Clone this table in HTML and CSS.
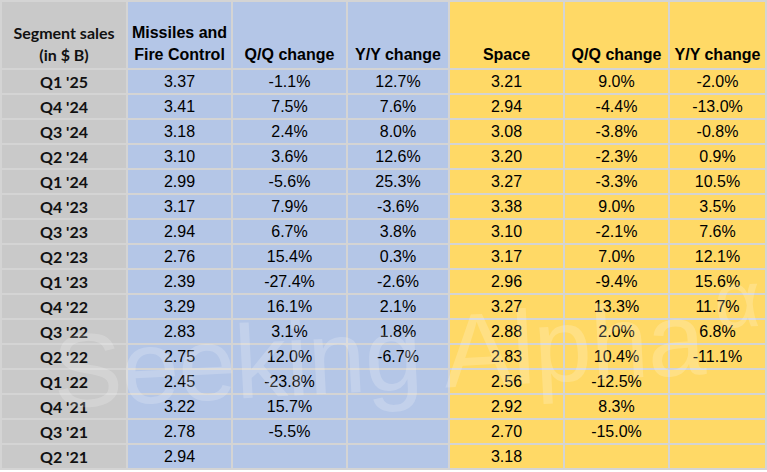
FILE: index.html
```html
<!DOCTYPE html>
<html>
<head>
<meta charset="utf-8">
<link rel="stylesheet" href="styles.css">
</head>
<body>
<div class="sheet">
<table class="grid">
<colgroup>
<col class="c1"><col class="c2"><col class="c3"><col class="c4"><col class="c5"><col class="c6"><col class="c7">
</colgroup>
<thead>
<tr>
<th class="seg">Segment sales<br>(in $ B)</th>
<th class="b">Missiles and<br>Fire Control</th>
<th class="b">Q/Q change</th>
<th class="b">Y/Y change</th>
<th class="y">Space</th>
<th class="y">Q/Q change</th>
<th class="y">Y/Y change</th>
</tr>
</thead>
<tbody>
<tr><td class="seg">Q1 '25</td><td class="b">3.37</td><td class="b">-1.1%</td><td class="b">12.7%</td><td class="y">3.21</td><td class="y">9.0%</td><td class="y">-2.0%</td></tr>
<tr><td class="seg">Q4 '24</td><td class="b">3.41</td><td class="b">7.5%</td><td class="b">7.6%</td><td class="y">2.94</td><td class="y">-4.4%</td><td class="y">-13.0%</td></tr>
<tr><td class="seg">Q3 '24</td><td class="b">3.18</td><td class="b">2.4%</td><td class="b">8.0%</td><td class="y">3.08</td><td class="y">-3.8%</td><td class="y">-0.8%</td></tr>
<tr><td class="seg">Q2 '24</td><td class="b">3.10</td><td class="b">3.6%</td><td class="b">12.6%</td><td class="y">3.20</td><td class="y">-2.3%</td><td class="y">0.9%</td></tr>
<tr><td class="seg">Q1 '24</td><td class="b">2.99</td><td class="b">-5.6%</td><td class="b">25.3%</td><td class="y">3.27</td><td class="y">-3.3%</td><td class="y">10.5%</td></tr>
<tr><td class="seg">Q4 '23</td><td class="b">3.17</td><td class="b">7.9%</td><td class="b">-3.6%</td><td class="y">3.38</td><td class="y">9.0%</td><td class="y">3.5%</td></tr>
<tr><td class="seg">Q3 '23</td><td class="b">2.94</td><td class="b">6.7%</td><td class="b">3.8%</td><td class="y">3.10</td><td class="y">-2.1%</td><td class="y">7.6%</td></tr>
<tr><td class="seg">Q2 '23</td><td class="b">2.76</td><td class="b">15.4%</td><td class="b">0.3%</td><td class="y">3.17</td><td class="y">7.0%</td><td class="y">12.1%</td></tr>
<tr><td class="seg">Q1 '23</td><td class="b">2.39</td><td class="b">-27.4%</td><td class="b">-2.6%</td><td class="y">2.96</td><td class="y">-9.4%</td><td class="y">15.6%</td></tr>
<tr><td class="seg">Q4 '22</td><td class="b">3.29</td><td class="b">16.1%</td><td class="b">2.1%</td><td class="y">3.27</td><td class="y">13.3%</td><td class="y">11.7%</td></tr>
<tr><td class="seg">Q3 '22</td><td class="b">2.83</td><td class="b">3.1%</td><td class="b">1.8%</td><td class="y">2.88</td><td class="y">2.0%</td><td class="y">6.8%</td></tr>
<tr><td class="seg">Q2 '22</td><td class="b">2.75</td><td class="b">12.0%</td><td class="b">-6.7%</td><td class="y">2.83</td><td class="y">10.4%</td><td class="y">-11.1%</td></tr>
<tr><td class="seg">Q1 '22</td><td class="b">2.45</td><td class="b">-23.8%</td><td class="b"></td><td class="y">2.56</td><td class="y">-12.5%</td><td class="y"></td></tr>
<tr><td class="seg">Q4 '21</td><td class="b">3.22</td><td class="b">15.7%</td><td class="b"></td><td class="y">2.92</td><td class="y">8.3%</td><td class="y"></td></tr>
<tr><td class="seg">Q3 '21</td><td class="b">2.78</td><td class="b">-5.5%</td><td class="b"></td><td class="y">2.70</td><td class="y">-15.0%</td><td class="y"></td></tr>
<tr><td class="seg">Q2 '21</td><td class="b">2.94</td><td class="b"></td><td class="b"></td><td class="y">3.18</td><td class="y"></td><td class="y"></td></tr>
</tbody>
</table>
<div class="watermark">Seeking Alpha<span class="alpha">α</span></div>
</div>
</body>
</html>
```

FILE: styles.css
```css
html, body {
  margin: 0;
  padding: 0;
  background: #ffffff;
}

.sheet {
  position: relative;
  width: 767px;
  height: 472px;
  overflow: hidden;
}

.grid {
  border-collapse: separate;
  border-spacing: 2px;
  background: #d4d4d4;
  width: 767px;
  table-layout: fixed;
  font-family: "Liberation Sans", Arial, sans-serif;
  font-size: 16px;
  color: #000;
}

.c1 { width: 124px; }
.c2 { width: 103px; }
.c3 { width: 113px; }
.c4 { width: 100px; }
.c5 { width: 113px; }
.c6 { width: 103px; }
.c7 { width: 95px; }

.grid th, .grid td {
  padding: 0;
  text-align: center;
  white-space: nowrap;
  overflow: hidden;
}

.grid th {
  height: 66px;
  vertical-align: bottom;
  line-height: 22px;
  font-weight: bold;
  padding-bottom: 2px;
  box-sizing: border-box;
}

.grid td {
  height: 23px;
  line-height: 23px;
  vertical-align: middle;
}

.seg {
  background: #c9c9c9;
  font-family: Lato, "Liberation Sans", sans-serif;
  font-weight: bold;
  font-size: 16px;
  color: #111;
}

.grid th.seg {
  font-size: 16px;
}

.b { background: #b4c6e7; }
.y { background: #ffd966; }

.watermark {
  position: absolute;
  left: 56px;
  top: 276px;
  font-family: "Liberation Sans", Arial, sans-serif;
  font-size: 104px;
  line-height: 120px;
  color: rgba(255, 255, 255, 0.2);
  white-space: nowrap;
  pointer-events: none;
  letter-spacing: -1px;
  transform: rotate(-3deg);
  transform-origin: left bottom;
}

.alpha {
  font-size: 80px;
  vertical-align: 45px;
  margin-left: 12px;
}
```
